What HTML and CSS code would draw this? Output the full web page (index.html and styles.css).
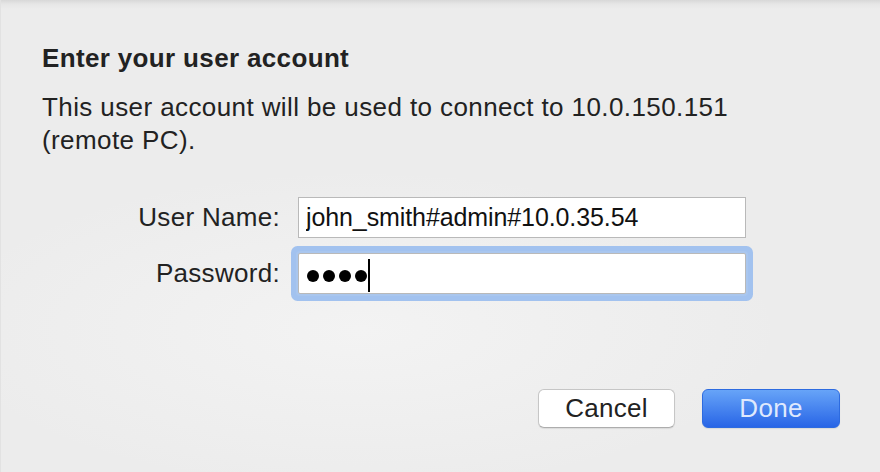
FILE: index.html
```html
<!DOCTYPE html>
<html lang="en">

<head>
    <meta charset="UTF-8">
    <title>Enter your user account</title>
    <link rel="stylesheet" href="styles.css">
</head>

<body>
    <div class="sheet">
        <h1>Enter your user account</h1>
        <p class="info">This user account will be used to connect to 10.0.150.151<br>(remote PC).</p>

        <div class="form">
            <label for="user">User Name:</label>
            <div class="field"><input id="user" type="text" value="john_smith#admin#10.0.35.54"></div>
            <label>Password:</label>
            <div class="field focused">
                <span class="dot"></span><span class="dot"></span><span class="dot"></span><span class="dot"></span>
                <span class="caret"></span>
            </div>
        </div>

        <div class="buttons">
            <button class="btn">Cancel</button>
            <button class="btn primary">Done</button>
        </div>
    </div>
</body>

</html>
```

FILE: styles.css
```css
html, body {
    margin: 0;
    height: 100%;
}

body {
    font-family: "Liberation Sans", Arial, sans-serif;
    color: #222;
    background: #eeeeee;
}

.sheet {
    height: 472px;
    box-sizing: border-box;
    padding: 43px 41px 0 41px;
    background:
        linear-gradient(to bottom, #d8d8d8 0, #e6e6e6 4px, rgba(238, 238, 238, 0) 9px),
        radial-gradient(ellipse 420px 160px at 360px 330px, #f3f3f3 0, rgba(238, 238, 238, 0) 100%),
        #ececec;
    border-left: 1px solid #e2e2e2;
}

h1 {
    margin: 0;
    font-size: 26px;
    font-weight: bold;
    line-height: 30px;
    letter-spacing: 0.35px;
    color: #222;
}

.info {
    margin: 18px 0 0 0;
    font-size: 26px;
    line-height: 33px;
    letter-spacing: 0.4px;
}

.form {
    display: grid;
    grid-template-columns: 238px 448px;
    column-gap: 18px;
    row-gap: 15px;
    align-items: center;
    margin-top: 40px;
}

label {
    text-align: right;
    font-size: 26px;
    line-height: 41px;
    letter-spacing: 0.3px;
}

.field {
    height: 41px;
    box-sizing: border-box;
    border: 1px solid #b9b9b9;
    background: #fff;
    display: flex;
    align-items: center;
}

.field input {
    border: 0;
    outline: none;
    width: 100%;
    font: 25px "Liberation Sans", Arial, sans-serif;
    letter-spacing: -0.1px;
    color: #111;
    padding: 0 0 0 7px;
    background: transparent;
}

.focused {
    padding-left: 8px;
    gap: 4px;
    box-shadow: 0 0 0 2px #a9c6ee, 0 0 0 7px #a2c2ef;
    border-radius: 2px;
}

.dot {
    width: 12px;
    height: 12px;
    border-radius: 50%;
    background: #000;
    margin-top: 5px;
}

.caret {
    width: 2px;
    height: 33px;
    background: #000;
    margin-left: -3px;
    margin-top: 3px;
}

.buttons {
    display: flex;
    justify-content: flex-end;
    gap: 27px;
    margin-top: 95px;
    margin-right: -1px;
}

.btn {
    width: 137px;
    height: 39px;
    padding: 0;
    font: 26px "Liberation Sans", Arial, sans-serif;
    letter-spacing: 0.3px;
    color: #222;
    background: #fff;
    border: 1px solid #c6c6c6;
    border-bottom-color: #adadad;
    border-radius: 6px;
    box-shadow: 0 1px 1px rgba(0, 0, 0, 0.08);
}

.primary {
    width: 138px;
    color: #dfe9fd;
    background: linear-gradient(to bottom, #67a4f8, #2865e6);
    border: 1px solid #2d6be0;
}
```
